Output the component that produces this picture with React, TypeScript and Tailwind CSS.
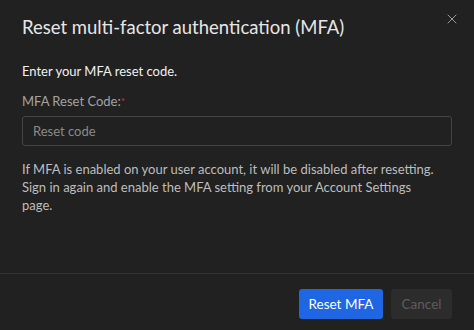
import { X } from 'lucide-react';

export default function App() {
  return (
    <div
      className="w-[474px] h-[330px] bg-[#212121] flex flex-col"
      style={{ fontFamily: 'Lato, "Noto Sans", sans-serif' }}
    >
      <div className="flex-1 flex flex-col px-[22px]">
        <div className="flex items-start justify-between pt-[13px]">
          <h2 className="text-[18.5px] leading-[28px] text-[#e6e6e6]">
            Reset multi-factor authentication (MFA)
          </h2>
          <button className="mt-[-2px] mr-[-8px] text-[#9a9a9a]">
            <X size={16} strokeWidth={1.5} />
          </button>
        </div>

        <p className="mt-[21px] text-[13px] leading-[18px] text-[#f0f0f0]">Enter your MFA reset code.</p>

        <label className="mt-[12px] text-[13px] leading-[18px] text-[#a3a3a3]">
          MFA Reset Code:<span className="text-[#d13438] text-[10px] align-top">*</span>
        </label>

        <input
          placeholder="Reset code"
          className="mt-[6px] h-[30px] w-full rounded-[3px] border border-[#444] bg-transparent px-[10px] text-[13px] text-[#ddd] placeholder:text-[#8a8a8a] outline-none"
        />

        <p className="mt-[14px] w-[416px] text-[13px] leading-[18px] text-[#bdbdbd]">
          If MFA is enabled on your user account, it will be disabled after resetting. Sign in again and enable the MFA
          setting from your Account Settings page.
        </p>
      </div>

      <div className="border-t border-[#333] h-[57px] flex items-start justify-end gap-[8px] px-[22px] pt-[15px]">
        <button className="h-[30px] w-[84px] rounded-[3px] bg-[#1f66e5] text-[13.5px] text-white">Reset MFA</button>
        <button className="h-[30px] w-[61px] rounded-[3px] bg-[#2c2c2c] text-[13.5px] text-[#5c5c5c]">Cancel</button>
      </div>
    </div>
  );
}
